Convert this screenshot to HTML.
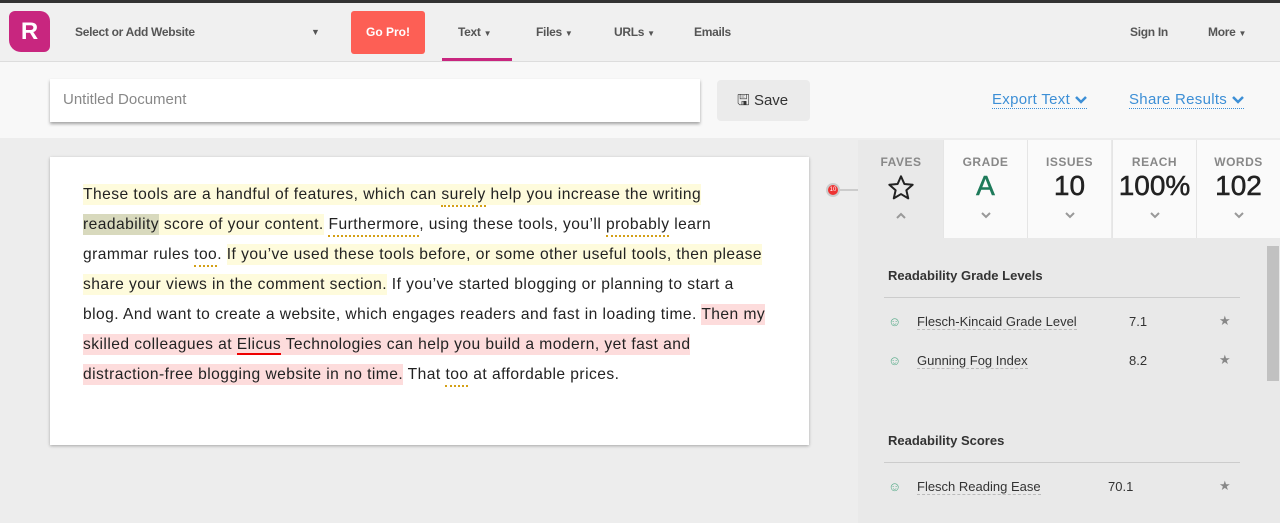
<!DOCTYPE html>
<html><head><meta charset="utf-8"><style>
*{margin:0;padding:0;box-sizing:border-box}
body{width:1280px;height:523px;overflow:hidden;background:#ededed;font-family:"Liberation Sans",sans-serif;position:relative;color:#222}
.a{position:absolute}
.top{left:0;top:0;width:1280px;height:3px;background:#333}
.nav{left:0;top:3px;width:1280px;height:59px;background:#f0f0f0;border-bottom:1px solid #ddd}
.nv{font-size:12px;font-weight:bold;color:#555;top:25px;letter-spacing:-.3px}
.bar2{left:0;top:62px;width:1280px;height:76px;background:#f8f8f8}
.line{left:83px;font-size:15.6px;white-space:nowrap;height:26px;line-height:26px;color:#222;letter-spacing:.45px}
.line span{padding:2px 0}
.y{background:#fefbdc}.p{background:#fddcdc}.g{background:#d8d9bd}
.du{border-bottom:2px dotted #d4a017}
.tab{top:140px;width:84px;height:98px;background:#fafafa;border-left:1px solid #e5e5e5;text-align:center}
.tab .h{font-size:12px;font-weight:bold;color:#888;margin-top:15px;letter-spacing:.5px}
.tab .v{font-size:28px;color:#222;margin-top:1px;height:34px;-webkit-text-stroke:.5px}
.tab .c{margin-top:2px}
.sec{font-size:13px;font-weight:bold;color:#333;left:888px}
.hr{left:884px;width:356px;height:1px;background:#ccc}
.row{font-size:13px;color:#333}
.lnk{border-bottom:1px dashed #bbb}
</style></head><body>
<div class="a top"></div>
<div class="a nav"></div>
<div class="a" style="left:9px;top:11px;width:41px;height:41px;background:#c8267f;border-radius:6px 10px 6px 12px;color:#fff;font-size:24px;font-weight:bold;text-align:center;line-height:41px">R</div>
<div class="a nv" style="left:75px">Select or Add Website</div>
<div class="a nv" style="left:311px;font-size:9px;top:27px">▼</div>
<div class="a" style="left:351px;top:11px;width:74px;height:43px;background:#fd5f55;border-radius:3px;color:#fff;font-size:12px;font-weight:bold;text-align:center;line-height:43px">Go Pro!</div>
<div class="a nv" style="left:458px">Text <span style="font-size:8px">▼</span></div>
<div class="a" style="left:442px;top:58px;width:70px;height:3px;background:#c8267f"></div>
<div class="a nv" style="left:536px">Files <span style="font-size:8px">▼</span></div>
<div class="a nv" style="left:614px">URLs <span style="font-size:8px">▼</span></div>
<div class="a nv" style="left:694px">Emails</div>
<div class="a nv" style="left:1130px">Sign In</div>
<div class="a nv" style="left:1208px">More <span style="font-size:8px">▼</span></div>
<div class="a bar2"></div>
<div class="a" style="left:50px;top:79px;width:650px;height:43px;background:#fff;box-shadow:0 2px 3px rgba(0,0,0,.35);font-size:15px;color:#888;padding:12px 13px">Untitled Document</div>
<div class="a" style="left:717px;top:80px;width:93px;height:41px;background:#ebebeb;border-radius:4px;font-size:15px;color:#333;line-height:41px;padding-left:20px">🖫 Save</div>
<div class="a" style="left:992px;top:91px;font-size:15px;color:#3d8fd6;border-bottom:1px dotted #3d8fd6;letter-spacing:.3px">Export Text <svg width="12" height="8" viewBox="0 0 12 8"><path d="M1 1l5 5 5-5" stroke="#3d8fd6" stroke-width="2.5" fill="none"/></svg></div>
<div class="a" style="left:1129px;top:91px;font-size:15px;color:#3d8fd6;border-bottom:1px dotted #3d8fd6;letter-spacing:.3px">Share Results <svg width="12" height="8" viewBox="0 0 12 8"><path d="M1 1l5 5 5-5" stroke="#3d8fd6" stroke-width="2.5" fill="none"/></svg></div>

<div class="a" style="left:50px;top:157px;width:759px;height:288px;background:#fff;box-shadow:0 1px 3px rgba(0,0,0,.3)"></div>
<div class="a line" style="top:182px"><span class="y">These tools are a handful of features, which can <span class="du">surely</span> help you increase the writing</span></div>
<div class="a line" style="top:212px"><span class="g">readability</span><span class="y"> score of your content.</span> <span class="du">Furthermore</span>, using these tools, you’ll <span class="du">probably</span> learn</div>
<div class="a line" style="top:242px">grammar rules <span class="du">too</span>. <span class="y">If you’ve used these tools before, or some other useful tools, then please</span></div>
<div class="a line" style="top:272px"><span class="y">share your views in the comment section.</span> If you’ve started blogging or planning to start a</div>
<div class="a line" style="top:302px">blog. And want to create a website, which engages readers and fast in loading time. <span class="p">Then my</span></div>
<div class="a line" style="top:332px"><span class="p">skilled colleagues at <span style="border-bottom:2px solid #e00;padding:0">Elicus</span> Technologies can help you build a modern, yet fast and</span></div>
<div class="a line" style="top:362px"><span class="p">distraction-free blogging website in no time.</span> That <span class="du">too</span> at affordable prices.</div>

<div class="a" style="left:858px;top:140px;width:422px;height:383px;background:#e9e9e9"></div>
<div class="a" style="left:826px;top:183px;width:14px;height:14px;border-radius:50%;background:#e33;border:2px solid #ccc;color:#fff;font-size:6px;text-align:center;line-height:10px">10</div>
<div class="a" style="left:840px;top:189px;width:18px;height:2px;background:#ccc"></div>
<div class="a tab" style="left:859px;background:#e9e9e9;border:none"><div class="h">FAVES</div><div class="v"><svg width="28" height="28" viewBox="0 0 24 24" style="margin-top:4px"><path d="M12 2l2.9 6.6 7.1.6-5.4 4.7 1.6 7-6.2-3.7-6.2 3.7 1.6-7L2 9.2l7.1-.6z" fill="none" stroke="#222" stroke-width="1.7" stroke-linejoin="round"/></svg></div><div class="c"><svg width="10" height="7" viewBox="0 0 10 7"><path d="M1 6l4-4 4 4" stroke="#999" stroke-width="2" fill="none"/></svg></div></div>
<div class="a tab" style="left:943px"><div class="h">GRADE</div><div class="v" style="color:#1e7a5a">A</div><div class="c"><svg width="10" height="7" viewBox="0 0 10 7"><path d="M1 1l4 4 4-4" stroke="#999" stroke-width="2" fill="none"/></svg></div></div>
<div class="a tab" style="left:1027px"><div class="h">ISSUES</div><div class="v">10</div><div class="c"><svg width="10" height="7" viewBox="0 0 10 7"><path d="M1 1l4 4 4-4" stroke="#999" stroke-width="2" fill="none"/></svg></div></div>
<div class="a tab" style="left:1112px"><div class="h">REACH</div><div class="v">100%</div><div class="c"><svg width="10" height="7" viewBox="0 0 10 7"><path d="M1 1l4 4 4-4" stroke="#999" stroke-width="2" fill="none"/></svg></div></div>
<div class="a tab" style="left:1196px;width:84px"><div class="h">WORDS</div><div class="v">102</div><div class="c"><svg width="10" height="7" viewBox="0 0 10 7"><path d="M1 1l4 4 4-4" stroke="#999" stroke-width="2" fill="none"/></svg></div></div>
<div class="a" style="left:1267px;top:246px;width:12px;height:135px;background:#c1c1c1"></div>
<div class="a sec" style="top:268px">Readability Grade Levels</div>
<div class="a hr" style="top:297px"></div>
<div class="a row" style="left:888px;top:314px;color:#5a8">☺</div>
<div class="a row lnk" style="left:917px;top:314px">Flesch-Kincaid Grade Level</div>
<div class="a row" style="left:1129px;top:314px">7.1</div>
<div class="a row" style="left:1219px;top:313px;color:#888">★</div>
<div class="a row" style="left:888px;top:353px;color:#5a8">☺</div>
<div class="a row lnk" style="left:917px;top:353px">Gunning Fog Index</div>
<div class="a row" style="left:1129px;top:353px">8.2</div>
<div class="a row" style="left:1219px;top:352px;color:#888">★</div>
<div class="a sec" style="top:433px">Readability Scores</div>
<div class="a hr" style="top:462px"></div>
<div class="a row" style="left:888px;top:479px;color:#5a8">☺</div>
<div class="a row lnk" style="left:917px;top:479px">Flesch Reading Ease</div>
<div class="a row" style="left:1108px;top:479px">70.1</div>
<div class="a row" style="left:1219px;top:478px;color:#888">★</div>
</body></html>
